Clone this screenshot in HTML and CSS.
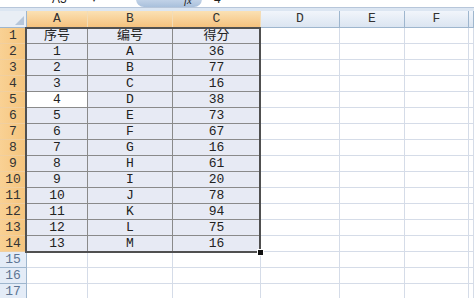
FILE: index.html
```html
<!DOCTYPE html>
<html lang="zh-CN">
<head>
  <meta charset="UTF-8">
  <meta name="viewport" content="width=device-width, initial-scale=1.0">
  <title>成绩表 - Excel</title>
  <link rel="stylesheet" href="styles.css">
</head>
<body>
  <div class="app">
    <!-- Formula bar (cut off at the top of the shot) -->
    <div class="formula-bar">
      <div class="fb-inner">
        <span class="name-box">A5</span>
        <span class="name-arrow">▾</span>
        <span class="fb-button"><span class="fx">fx</span></span>
        <span class="fb-value">4</span>
      </div>
    </div>
    <div class="strip"></div>

    <div class="sheet">
      <div class="grid" id="grid"></div>
      <div class="selection"><span class="handle"></span></div>
    </div>
  </div>

  <script>
    const COLS = ["A", "B", "C", "D", "E", "F", ""];
    const ROWS = [
      ["序号", "编号", "得分"],
      ["1", "A", "36"],
      ["2", "B", "77"],
      ["3", "C", "16"],
      ["4", "D", "38"],
      ["5", "E", "73"],
      ["6", "F", "67"],
      ["7", "G", "16"],
      ["8", "H", "61"],
      ["9", "I", "20"],
      ["10", "J", "78"],
      ["11", "K", "94"],
      ["12", "L", "75"],
      ["13", "M", "16"]
    ];
    const TOTAL_ROWS = 17;

    const grid = document.getElementById("grid");

    function addCell(cls, text) {
      const cell = document.createElement("div");
      cell.className = cls;
      cell.textContent = text || "";
      grid.appendChild(cell);
    }

    // Column headers
    addCell("corner");
    COLS.forEach(function (name, i) {
      addCell(i < 3 ? "col-head picked" : "col-head", name);
    });

    // Body rows
    for (let r = 1; r <= TOTAL_ROWS; r++) {
      const data = ROWS[r - 1];
      addCell(data ? "row-head picked" : "row-head", r);
      COLS.forEach(function (name, c) {
        if (data && c < 3) {
          const active = (r === 5 && c === 0) ? " active" : "";
          addCell("cell in-range" + active, data[c]);
        } else {
          addCell("cell");
        }
      });
    }
  </script>
</body>
</html>
```

FILE: styles.css
```css
body {
  margin: 0;
  padding: 0;
  background: #ffffff;
  overflow: hidden;
  font-family: "Liberation Mono", "Noto Sans CJK SC", monospace;
  font-size: 13px;
  color: #222;
}
.app {
  width: 474px;
  height: 298px;
  overflow: hidden;
}

/* formula bar */
.formula-bar {
  height: 8px;
  overflow: hidden;
  background: #fff;
  border-bottom: 1px solid #b7c6da;
  box-sizing: border-box;
}
.fb-inner {
  display: flex;
  align-items: center;
  height: 16px;
  margin-top: -9px;
  font-family: "Liberation Sans", sans-serif;
  font-size: 12px;
}
.name-box {
  margin-left: 52px;
  width: 40px;
}
.name-arrow {
  font-size: 8px;
  color: #333;
  width: 44px;
}
.fb-button {
  width: 66px;
  height: 16px;
  border-radius: 8px;
  background: linear-gradient(#dfe9f5, #a9c0dc);
  position: relative;
}
.fx {
  position: absolute;
  right: 10px;
  top: 3px;
  font-style: italic;
  font-family: "Liberation Serif", serif;
  font-size: 11px;
}
.fb-value {
  margin-left: 12px;
}
.strip {
  height: 3px;
  background: #dce6f2;
}

/* sheet */
.sheet {
  position: relative;
}
.grid {
  display: grid;
  grid-template-columns: 27px 61px 85px 88px 79px 65px 64px 1fr;
  grid-template-rows: 17px;
  grid-auto-rows: 16px;
}
.grid > div {
  box-sizing: border-box;
  border-right: 1px solid #d5dce8;
  border-bottom: 1px solid #d5dce8;
  text-align: center;
  line-height: 15px;
  white-space: nowrap;
  overflow: hidden;
}
.corner {
  background: #e9eef5;
  position: relative;
  border-color: #9eb6ce !important;
}
.corner::after {
  content: "";
  position: absolute;
  right: 2px;
  bottom: 2px;
  border-left: 9px solid transparent;
  border-bottom: 9px solid #b6c6da;
}
.col-head {
  background: linear-gradient(#f1f5fb, #dbe5f1);
  border-color: #9eb6ce !important;
  color: #333;
  line-height: 16px !important;
}
.col-head.picked {
  background: linear-gradient(#fbe1b4, #f5c27e);
  border-right-color: #f3dcb6 !important;
  border-bottom-color: #e2a35a !important;
}
.row-head {
  background: #e4ecf7;
  border-color: #9eb6ce !important;
  color: #5d7493;
}
.row-head.picked {
  background: linear-gradient(90deg, #f9d194, #f5c47c);
  border-right-color: #e2a35a !important;
  border-bottom-color: #f0cfa0 !important;
  color: #333;
}
.cell.in-range {
  background: #e7eaf4;
  border-right-color: #8a8a8a;
  border-bottom-color: #8a8a8a;
}
.cell.active {
  background: #ffffff;
}

/* selection outline */
.selection {
  position: absolute;
  left: 25px;
  top: 16px;
  width: 236px;
  height: 226px;
  box-sizing: border-box;
  border: 2px solid #505050;
  pointer-events: none;
}
.handle {
  position: absolute;
  right: -5px;
  bottom: -5px;
  width: 5px;
  height: 5px;
  background: #111;
  border: 1px solid #fff;
}
```
